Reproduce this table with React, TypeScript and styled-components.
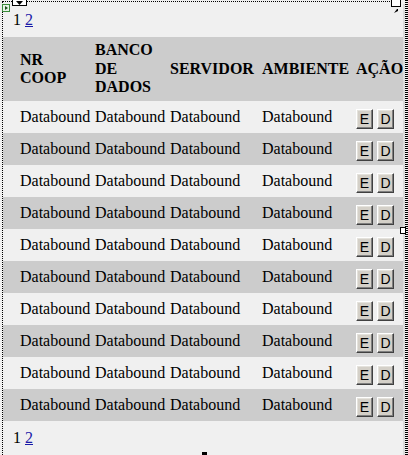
import React from "react";
import styled, { createGlobalStyle } from "styled-components";

const Global = createGlobalStyle`
  html, body { margin: 0; padding: 0; background: #f0f0f0; }
  body {
    font-family: "Liberation Serif", "Times New Roman", serif;
    font-size: 16px;
    color: #000;
  }
`;

const Designer = styled.div`
  position: relative;
  width: 408px;
  height: 455px;
  box-sizing: border-box;
  padding: 3px 5px 0 3px;
  background: #f0f0f0;
  overflow: hidden;
`;

const LeftEdge = styled.div`
  position: absolute;
  left: 2px;
  top: 1px;
  bottom: 0;
  border-left: 1px dotted #000;
`;

const TopEdge = styled.div`
  position: absolute;
  left: 2px;
  top: 1px;
  right: 8px;
  border-top: 1px dotted #000;
`;

const RightEdge = styled.div`
  position: absolute;
  top: 0;
  bottom: 0;
  right: 0;
  width: 3px;
  background: repeating-linear-gradient(
    to bottom,
    #000 0px,
    #000 1px,
    #f0f0f0 1px,
    #f0f0f0 2px
  );
`;

const RightShade = styled.div`
  position: absolute;
  top: 4px;
  bottom: 0;
  right: 3px;
  width: 2px;
  background: #dcdcdc;
`;

const SmartTag = styled.div`
  position: absolute;
  left: 2px;
  top: 4px;
  width: 6px;
  height: 6px;
  border: 1px solid #3a8a3a;
  background: #e8f4e8;
  &::after {
    content: "";
    position: absolute;
    left: 2px;
    top: 1px;
    border-left: 3px solid #1c4f1c;
    border-top: 2px solid transparent;
    border-bottom: 2px solid transparent;
  }
`;

const DownTab = styled.div`
  position: absolute;
  left: 12px;
  top: -1px;
  width: 13px;
  height: 5px;
  border: 1px solid #000;
  background: #fff;
  display: flex;
  justify-content: center;
  align-items: flex-end;
`;

const CornerTab = styled.div`
  position: absolute;
  left: 391px;
  top: -1px;
  width: 8px;
  height: 6px;
  border: 1px solid #000;
  background: #fff;
`;

const SideHandle = styled.div`
  position: absolute;
  left: 400px;
  top: 227px;
  width: 4px;
  height: 5px;
  border: 1px solid #000;
  background: #fff;
`;

const BottomHandle = styled.div`
  position: absolute;
  left: 202px;
  top: 452px;
  width: 5px;
  height: 3px;
  background: #000;
`;

const Pager = styled.div<{ $h: number }>`
  height: ${(p) => p.$h}px;
  display: flex;
  align-items: center;
  gap: 4px;
  padding-left: 10px;
  line-height: 1;
`;

const PageLink = styled.a`
  color: #1a1aa8;
  text-decoration: underline;
`;

const Grid = styled.table`
  width: 400px;
  border-collapse: collapse;
  border-spacing: 0;
  table-layout: fixed;
`;

const HeadRow = styled.tr`
  background: #cccccc;
  height: 64px;
`;

const Row = styled.tr<{ $alt: boolean }>`
  background: ${(p) => (p.$alt ? "#cccccc" : "#f0f0f0")};
  height: 32px;
`;

const Th = styled.th<{ $w: number; $pl?: number }>`
  width: ${(p) => p.$w}px;
  box-sizing: border-box;
  padding: 4px 0 4px ${(p) => p.$pl ?? 4}px;
  text-align: left;
  vertical-align: middle;
  font-weight: bold;
  line-height: 18.5px;
  white-space: normal;
  overflow: visible;
`;

const Td = styled.td<{ $pl?: number }>`
  padding: 0 0 0 ${(p) => p.$pl ?? 4}px;
  vertical-align: middle;
  white-space: nowrap;
  line-height: 18px;
`;

const Actions = styled.div`
  display: flex;
  gap: 4px;
  padding-top: 3px;
`;

const Btn = styled.button`
  width: 17px;
  height: 20px;
  padding: 0;
  margin: 0;
  box-sizing: border-box;
  font-family: "Liberation Sans", Arial, sans-serif;
  font-size: 14px;
  color: #000;
  background: #d4d0c8;
  border: 1px solid;
  border-color: #ffffff #404040 #404040 #ffffff;
  box-shadow: inset -1px -1px #808080, inset 1px 1px #e4e2dc;
  display: flex;
  align-items: center;
  justify-content: center;
`;

const rows = Array.from({ length: 10 }, (_, i) => i);

export default function App() {
  return (
    <>
      <Global />
      <Designer>
        <Pager $h={34}>
          <span>1</span>
          <PageLink href="#">2</PageLink>
        </Pager>
        <Grid>
          <thead>
            <HeadRow>
              <Th $w={88} $pl={17}>NR COOP</Th>
              <Th $w={75}>BANCO DE DADOS</Th>
              <Th $w={92}>SERVIDOR</Th>
              <Th $w={93}>AMBIENTE</Th>
              <Th $w={52} $pl={5}>AÇÃO</Th>
            </HeadRow>
          </thead>
          <tbody>
            {rows.map((i) => (
              <Row key={i} $alt={i % 2 === 1}>
                <Td $pl={17}>Databound</Td>
                <Td>Databound</Td>
                <Td>Databound</Td>
                <Td>Databound</Td>
                <Td $pl={5}>
                  <Actions>
                    <Btn>E</Btn>
                    <Btn>D</Btn>
                  </Actions>
                </Td>
              </Row>
            ))}
          </tbody>
        </Grid>
        <Pager $h={33}>
          <span>1</span>
          <PageLink href="#">2</PageLink>
        </Pager>
        <LeftEdge />
        <TopEdge />
        <RightShade />
        <RightEdge />
        <SmartTag />
        <DownTab>
          <svg width="7" height="4" viewBox="0 0 7 4">
            <path d="M0 0 H7 L3.5 4 Z" fill="#000" />
          </svg>
        </DownTab>
        <CornerTab>
          <svg width="8" height="6" viewBox="0 0 8 6">
            <path d="M2 5 L5 1 L6 1 L6 3 Z" fill="#000" />
          </svg>
        </CornerTab>
        <SideHandle />
        <BottomHandle />
      </Designer>
    </>
  );
}
